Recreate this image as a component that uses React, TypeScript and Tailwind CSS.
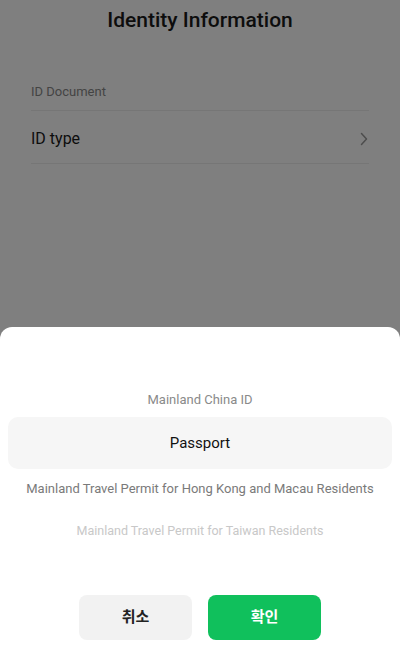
import React from 'react';

const font = { fontFamily: 'Roboto, "Noto Sans", "Noto Sans CJK KR", sans-serif' };

function Chevron() {
    return (
        <svg width="10" height="14" viewBox="0 0 10 14" fill="none">
            <path d="M2.5 1.5 L7.5 7 L2.5 12.5" stroke="#9a9a9a" strokeWidth="1.5" strokeLinecap="round" strokeLinejoin="round" />
        </svg>
    );
}

export default function App() {
    return (
        <div className="relative h-[656px] w-[400px] overflow-hidden bg-white" style={font}>
            {/* Page */}
            <div className="flex flex-col">
                <h1 className="h-[42px] flex items-center justify-center text-[21px] font-medium text-[#1a1a1a]">
                    Identity Information
                </h1>
                <div className="px-[31px] pt-[38px]">
                    <div className="h-[31px] flex items-start pt-[2px] text-[13px] text-[#888] border-b border-[#ececec]">
                        ID Document
                    </div>
                    <div className="h-[53px] pt-[3px] flex items-center justify-between border-b border-[#ececec]">
                        <span className="text-[16px] text-[#1a1a1a]">ID type</span>
                        <Chevron />
                    </div>
                </div>
            </div>

            {/* Backdrop */}
            <div className="absolute inset-0 bg-black/50" />

            {/* Bottom sheet */}
            <div className="absolute inset-x-0 bottom-0 h-[329px] bg-white rounded-t-[12px] flex flex-col">
                <div className="pt-[55px] flex flex-col items-center">
                    <div className="h-[35px] w-full flex items-center justify-center text-[13px] text-[#8a8a8a]">
                        Mainland China ID
                    </div>
                    <div className="mx-[8px] h-[52px] self-stretch flex items-center justify-center rounded-[10px] bg-[#f6f6f6] text-[15px] text-[#111]">
                        Passport
                    </div>
                    <div className="h-[39px] pt-[1px] w-full flex items-center justify-center text-[13px] text-[#7a7a7a]">
                        Mainland Travel Permit for Hong Kong and Macau Residents
                    </div>
                    <div className="h-[46px] w-full flex items-center justify-center text-[12.5px] text-[#c8c8c8]">
                        Mainland Travel Permit for Taiwan Residents
                    </div>
                </div>
                <div className="mt-[41px] flex justify-center gap-[16px]">
                    <button className="w-[113px] h-[45px] rounded-[8px] bg-[#f2f2f2] text-[15px] font-bold text-[#222]">
                        취소
                    </button>
                    <button className="w-[113px] h-[45px] rounded-[8px] bg-[#10c05c] text-[15px] font-bold text-white">
                        확인
                    </button>
                </div>
            </div>
        </div>
    );
}
